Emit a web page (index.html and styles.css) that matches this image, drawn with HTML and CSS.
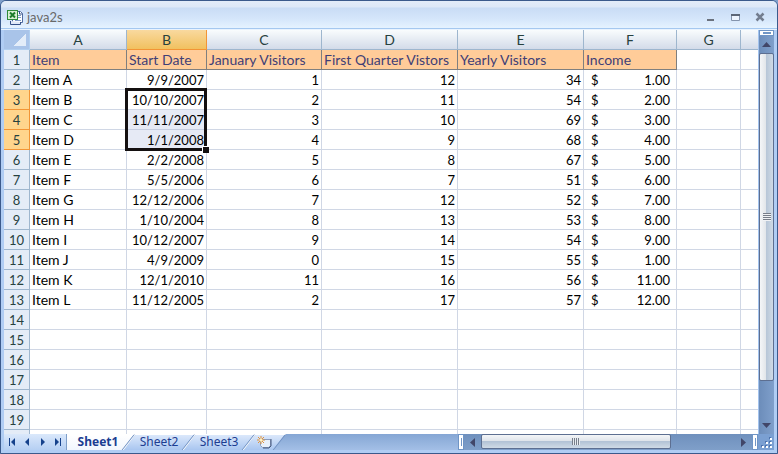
FILE: index.html
```
<!DOCTYPE html>
<html lang="en">
<head>
    <meta charset="utf-8">
    <title>java2s</title>
    <link rel="stylesheet" href="styles.css">
</head>
<body>
    <div class="window">
        <header class="titlebar">
            <svg class="app-icon" width="16" height="16" viewBox="0 0 16 16">
                <path d="M5.500 2.500h8l2 2v9h-10z" fill="#fff" stroke="#4f6ba0"/>
                <path d="M10 6.500h4M10 8.500h4M8 11.500h6" stroke="#7c9bc8"/>
                <path d="M12.500 2v3h3" fill="none" stroke="#35528a"/>
                <path d="M3.500 12v3.500h10V13" fill="#dfe9f8" stroke="#35528a"/>
                <rect x="0.5" y="1.5" width="10" height="9" fill="#d9f0d4" stroke="#2f8b3a"/>
                <path d="M3 3.500l5 5M8 3.500l-5 5" stroke="#1d7d2b" stroke-width="2"/>
            </svg>
            <h1>java2s</h1>
            <div class="window-buttons">
                <button type="button" aria-label="Minimize">
                    <svg width="12" height="12" viewBox="0 0 12 12"><path d="M3 9h7" stroke="#6b727e" stroke-width="2"/></svg>
                </button>
                <button type="button" aria-label="Maximize">
                    <svg width="12" height="12" viewBox="0 0 12 12"><path d="M2.500 3.500h8v6h-8z" fill="#eef5ff" stroke="#8494ad"/><path d="M2 4h9" stroke="#5c6677" stroke-width="2"/></svg>
                </button>
                <button type="button" aria-label="Close">
                    <svg width="12" height="12" viewBox="0 0 12 12"><path d="M2.500 2.500l7 7M9.500 2.500l-7 7" stroke="#737d8f" stroke-width="2.500"/></svg>
                </button>
            </div>
        </header>

        <main class="workbook">
            <div class="sheet">
                <table>
                    <colgroup>
                        <col class="col-num"><col class="col-a"><col class="col-b"><col class="col-c"><col class="col-d"><col class="col-e"><col class="col-f"><col class="col-g"><col>
                    </colgroup>
                    <thead>
                        <tr>
                            <th class="select-all"></th>
                            <th scope="col">A</th>
                            <th scope="col" class="active">B</th>
                            <th scope="col">C</th>
                            <th scope="col">D</th>
                            <th scope="col">E</th>
                            <th scope="col">F</th>
                            <th scope="col">G</th>
                            <th></th>
                        </tr>
                    </thead>
                    <tbody>
                        <tr class="labels"><th scope="row">1</th><td>Item</td><td>Start Date</td><td>January Visitors</td><td>First Quarter Vistors</td><td>Yearly Visitors</td><td>Income</td><td></td><td></td></tr>
                        <tr><th scope="row">2</th><td>Item A</td><td>9/9/2007</td><td>1</td><td>12</td><td>34</td><td><div class="money"><span>$</span><span>1.00</span></div></td><td></td><td></td></tr>
                        <tr><th scope="row" class="active">3</th><td>Item B</td><td class="anchor">10/10/2007<div class="selection"></div></td><td>2</td><td>11</td><td>54</td><td><div class="money"><span>$</span><span>2.00</span></div></td><td></td><td></td></tr>
                        <tr><th scope="row" class="active">4</th><td>Item C</td><td class="selected">11/11/2007</td><td>3</td><td>10</td><td>69</td><td><div class="money"><span>$</span><span>3.00</span></div></td><td></td><td></td></tr>
                        <tr><th scope="row" class="active">5</th><td>Item D</td><td class="selected">1/1/2008</td><td>4</td><td>9</td><td>68</td><td><div class="money"><span>$</span><span>4.00</span></div></td><td></td><td></td></tr>
                        <tr><th scope="row">6</th><td>Item E</td><td>2/2/2008</td><td>5</td><td>8</td><td>67</td><td><div class="money"><span>$</span><span>5.00</span></div></td><td></td><td></td></tr>
                        <tr><th scope="row">7</th><td>Item F</td><td>5/5/2006</td><td>6</td><td>7</td><td>51</td><td><div class="money"><span>$</span><span>6.00</span></div></td><td></td><td></td></tr>
                        <tr><th scope="row">8</th><td>Item G</td><td>12/12/2006</td><td>7</td><td>12</td><td>52</td><td><div class="money"><span>$</span><span>7.00</span></div></td><td></td><td></td></tr>
                        <tr><th scope="row">9</th><td>Item H</td><td>1/10/2004</td><td>8</td><td>13</td><td>53</td><td><div class="money"><span>$</span><span>8.00</span></div></td><td></td><td></td></tr>
                        <tr><th scope="row">10</th><td>Item I</td><td>10/12/2007</td><td>9</td><td>14</td><td>54</td><td><div class="money"><span>$</span><span>9.00</span></div></td><td></td><td></td></tr>
                        <tr><th scope="row">11</th><td>Item J</td><td>4/9/2009</td><td>0</td><td>15</td><td>55</td><td><div class="money"><span>$</span><span>1.00</span></div></td><td></td><td></td></tr>
                        <tr><th scope="row">12</th><td>Item K</td><td>12/1/2010</td><td>11</td><td>16</td><td>56</td><td><div class="money"><span>$</span><span>11.00</span></div></td><td></td><td></td></tr>
                        <tr><th scope="row">13</th><td>Item L</td><td>11/12/2005</td><td>2</td><td>17</td><td>57</td><td><div class="money"><span>$</span><span>12.00</span></div></td><td></td><td></td></tr>
                        <tr><th scope="row">14</th><td></td><td></td><td></td><td></td><td></td><td></td><td></td><td></td></tr>
                        <tr><th scope="row">15</th><td></td><td></td><td></td><td></td><td></td><td></td><td></td><td></td></tr>
                        <tr><th scope="row">16</th><td></td><td></td><td></td><td></td><td></td><td></td><td></td><td></td></tr>
                        <tr><th scope="row">17</th><td></td><td></td><td></td><td></td><td></td><td></td><td></td><td></td></tr>
                        <tr><th scope="row">18</th><td></td><td></td><td></td><td></td><td></td><td></td><td></td><td></td></tr>
                        <tr><th scope="row">19</th><td></td><td></td><td></td><td></td><td></td><td></td><td></td><td></td></tr>
                        <tr><th></th><td></td><td></td><td></td><td></td><td></td><td></td><td></td><td></td></tr>
                    </tbody>
                </table>
            </div>
            <div class="vscroll">
                <div class="split-v"></div>
                <button type="button" aria-label="Scroll up"><svg width="9" height="5" viewBox="0 0 9 5"><path d="M0 5l4.500-5L9 5z" fill="#414668"/></svg></button>
                <div class="track-v"><div class="thumb-v"><span class="grip-v"></span></div></div>
                <button type="button" aria-label="Scroll down"><svg width="9" height="5" viewBox="0 0 9 5"><path d="M0 0l4.500 5L9 0z" fill="#414668"/></svg></button>
            </div>
        </main>

        <footer class="bottombar">
            <div class="sheet-nav">
                <button type="button" aria-label="First sheet"><svg width="7" height="8" viewBox="0 0 7 8"><path d="M0 0h1v8H0zM6 0v8L2 4z" fill="#17428c"/></svg></button>
                <button type="button" aria-label="Previous sheet"><svg width="7" height="8" viewBox="0 0 7 8"><path d="M5 0v8L1 4z" fill="#17428c"/></svg></button>
                <button type="button" aria-label="Next sheet"><svg width="7" height="8" viewBox="0 0 7 8"><path d="M2 0v8l4-4z" fill="#17428c"/></svg></button>
                <button type="button" aria-label="Last sheet"><svg width="7" height="8" viewBox="0 0 7 8"><path d="M6 0h1v8H6zM1 0v8l4-4z" fill="#17428c"/></svg></button>
            </div>
            <div class="tabs">
                <button type="button" class="tab current">Sheet1</button>
                <button type="button" class="tab">Sheet2</button>
                <button type="button" class="tab">Sheet3</button>
                <button type="button" class="tab new-tab" aria-label="Insert worksheet">
                    <svg width="15" height="13" viewBox="0 0 15 13">
                        <path d="M3.500 3.500h10v6l-2 2h-6l-2-2z" fill="#e9f0fb" stroke="#8c9dbd"/>
                        <path d="M14 3v7l-2 2H6" fill="none" stroke="#44577c"/>
                        <path d="M4 0v8M0 4h8M1 1l6 6M7 1L1 7" stroke="#e0913a"/>
                        <circle cx="4" cy="4" r="1.500" fill="#fff3c4"/>
                    </svg>
                </button>
            </div>
            <div class="hscroll">
                <div class="split-h"></div>
                <button type="button" aria-label="Scroll left"><svg width="5" height="9" viewBox="0 0 5 9"><path d="M5 0v9L0 4.500z" fill="#414668"/></svg></button>
                <div class="track-h"><div class="thumb-h"><span class="grip-h"></span></div></div>
                <button type="button" aria-label="Scroll right"><svg width="5" height="9" viewBox="0 0 5 9"><path d="M0 0v9l5-4.500z" fill="#414668"/></svg></button>
                <div class="split-h"></div>
            </div>
            <svg class="resize" width="16" height="16" viewBox="0 0 16 16">
                <path d="M11 3h2v2h-2zM7 7h2v2H7zM11 7h2v2h-2zM3 11h2v2H3zM7 11h2v2H7zM11 11h2v2h-2z" fill="#4e74ae"/>
                <path d="M12 4h2v2h-2zM8 8h2v2H8zM12 8h2v2h-2zM4 12h2v2H4zM8 12h2v2H8zM12 12h2v2h-2z" fill="#fff"/>
            </svg>
        </footer>
    </div>
</body>
</html>
```

FILE: styles.css
```
* {
    box-sizing: border-box;
}
body {
    margin: 0;
    background-color: #7f9fcb;
    font-family: Lato, Carlito, sans-serif;
    font-size: 14px;
    color: #000;
}
button {
    display: flex;
    align-items: center;
    justify-content: center;
    padding: 0;
    border: none;
    background: none;
    font: inherit;
}
.window {
    display: flex;
    flex-direction: column;
    height: 100vh;
    padding: 0 3px 3px;
    border: 1px solid #3b5a8c;
    border-radius: 6px 6px 0 0;
    background-color: #b0cdf4;
    overflow: hidden;
}

/* title bar */
.titlebar {
    display: flex;
    flex: none;
    align-items: center;
    height: 29px;
    margin: 0 -3px;
    padding: 3px 11px 0 6px;
    border-bottom: 1px solid #e8f3ff;
    background: linear-gradient(#e3ecf9 0, #dde8f8 6px, #c9dcf5 7px, #d5e6fb 18px, #e5f3ff 27px, #a5c8f0 27px);
}
.titlebar h1 {
    flex: 1;
    margin: 0 0 0 4px;
    font-size: 13px;
    font-weight: normal;
    color: #696969;
}
.window-buttons {
    display: flex;
    gap: 13px;
}

/* grid */
.workbook {
    display: flex;
    flex: 1;
    min-height: 0;
}
.sheet {
    flex: 1;
    min-width: 0;
    overflow: hidden;
    background-color: #fff;
}
table {
    width: 100%;
    table-layout: fixed;
    border-collapse: separate;
    border-spacing: 0;
}
.col-num { width: 26px; }
.col-a { width: 97px; }
.col-b { width: 80px; }
.col-c { width: 115px; }
.col-d { width: 136px; }
.col-e { width: 126px; }
.col-f { width: 93px; }
.col-g { width: 64px; }
th, td {
    height: 20px;
    padding: 1px 2px 0;
    border-right: 1px solid #d0d7e5;
    border-bottom: 1px solid #d0d7e5;
    line-height: 18px;
    white-space: nowrap;
}
th {
    padding: 1px 0 0;
    border-color: #9eb6ce;
    background-color: #e4ecf7;
    font-weight: normal;
    color: #27413e;
    text-align: center;
}
thead th {
    background: linear-gradient(#f9fcfd, #d3dbe9);
}
tbody th, td {
    font-size: 13px;
}
td {
    text-align: right;
}
td:nth-child(2), .labels td {
    font-size: 14px;
    text-align: left;
}
td:last-child, th:last-child {
    border-right: none;
}
thead th.active {
    border-color: #f29536;
    background: linear-gradient(#f9d99f, #f1c15f);
}
tbody th.active {
    border-color: #f29536;
    background-color: #ffd58d;
}
thead .select-all {
    border-color: #b0cff0;
    background: linear-gradient(135deg, transparent 50%, #e3edf9 50%) 10px 4px / 12px 12px no-repeat, #a9c4e9;
}
.labels td:nth-child(-n+7) {
    border-color: #7f7f7f;
    background-color: #ffcc99;
    color: #3f3f76;
}
.money {
    display: flex;
    justify-content: space-between;
    padding: 0 4px 0 5px;
}
.anchor {
    position: relative;
}
.selected {
    border-bottom-color: #c5cde0;
    background-color: #e6eaf5;
}
/* frame round B3:B5, with the fill handle in its corner */
.selection {
    position: absolute;
    z-index: 1;
    top: -2px;
    left: -2px;
    width: 82px;
    height: 63px;
    border: 3px solid #141010;
}
.selection::after {
    content: "";
    position: absolute;
    right: -5px;
    bottom: -5px;
    width: 6px;
    height: 6px;
    border: 1px solid #fff;
    border-width: 1px 0 0 1px;
    background-color: #141010;
}

/* vertical scroll bar */
.vscroll {
    display: flex;
    flex: none;
    flex-direction: column;
    width: 16px;
    border-left: 1px solid #a3c3ee;
    background: linear-gradient(90deg, #6c8dba, #7f9fcb);
}
.vscroll button {
    flex: none;
    height: 17px;
}
.split-v {
    flex: none;
    height: 6px;
    border: 1px solid #6f95c6;
    background: linear-gradient(#fff 1px, #7196c6 1px, #7196c6 3px, #fff 3px) 3px 0 / 8px 4px no-repeat, #fff;
}
.track-v {
    flex: 1;
    min-height: 0;
}
.thumb-v {
    display: flex;
    align-items: center;
    justify-content: center;
    height: 90%;
    border: 1px solid #5d6f91;
    border-radius: 2px;
    background: linear-gradient(90deg, #f4f6f8, #e2e6ea 45%, #b8c7d8 50%, #cfdae6);
}
.grip-v {
    width: 8px;
    height: 8px;
    background: repeating-linear-gradient(#777e8a 0, #777e8a 1px, #f0f2f5 1px, #f0f2f5 2px);
}

/* sheet tabs and horizontal scroll bar */
.bottombar {
    display: flex;
    flex: none;
    height: 16px;
    background: linear-gradient(#85a6d4, #a3bfe6);
}
.sheet-nav {
    display: flex;
    align-items: center;
    justify-content: center;
    gap: 8px;
    width: 63px;
    border-right: 1px solid #7f9fc9;
    background: linear-gradient(#dae8fb, #b5cff3);
}
.tabs {
    display: flex;
    flex: 1;
    min-width: 0;
    overflow: hidden;
    font-family: "Noto Sans", sans-serif;
    font-size: 12px;
    line-height: 16px;
    color: #1c3d92;
}
.tab {
    position: relative;
    z-index: 0;
    flex: none;
    width: 60px;
    color: inherit;
}
.tab::before {
    content: "";
    position: absolute;
    z-index: -1;
    inset: 0;
    border: 1px solid #fff;
    border-width: 1px 0 0 1px;
    border-right: 1px solid #6e8fc0;
    background: linear-gradient(#dbe8fb, #a9c6f0);
    transform: skewX(-38deg);
}
.tab.current {
    width: 62px;
    font-weight: bold;
}
.tab.current::before {
    left: -12px;
    background: linear-gradient(#fff, #f1f6fe);
}
.tab.new-tab {
    width: 31px;
}
.hscroll {
    display: flex;
    flex: 0 0 39%;
    background: linear-gradient(#6f90bd, #7f9fc9);
}
.hscroll button {
    flex: none;
    width: 17px;
}
.split-h {
    flex: none;
    width: 6px;
    border: 1px solid #6f95c6;
    background: linear-gradient(90deg, #fff 1px, #7196c6 1px, #7196c6 2px, #fff 2px) 1px 3px / 3px 8px no-repeat, #fff;
}
.track-h {
    flex: 1;
    min-width: 0;
}
.thumb-h {
    display: flex;
    align-items: center;
    justify-content: center;
    width: 75%;
    height: 15px;
    border: 1px solid #5d6f91;
    border-radius: 2px;
    background: linear-gradient(#f4f6f8, #dfe4ea 45%, #b3c3d6 50%, #cfdae6);
}
.grip-h {
    width: 8px;
    height: 7px;
    background: repeating-linear-gradient(90deg, #777e8a 0, #777e8a 1px, #e8ecf0 1px, #e8ecf0 2px);
}
.resize {
    flex: none;
    background-color: #7ba0d2;
}
```
